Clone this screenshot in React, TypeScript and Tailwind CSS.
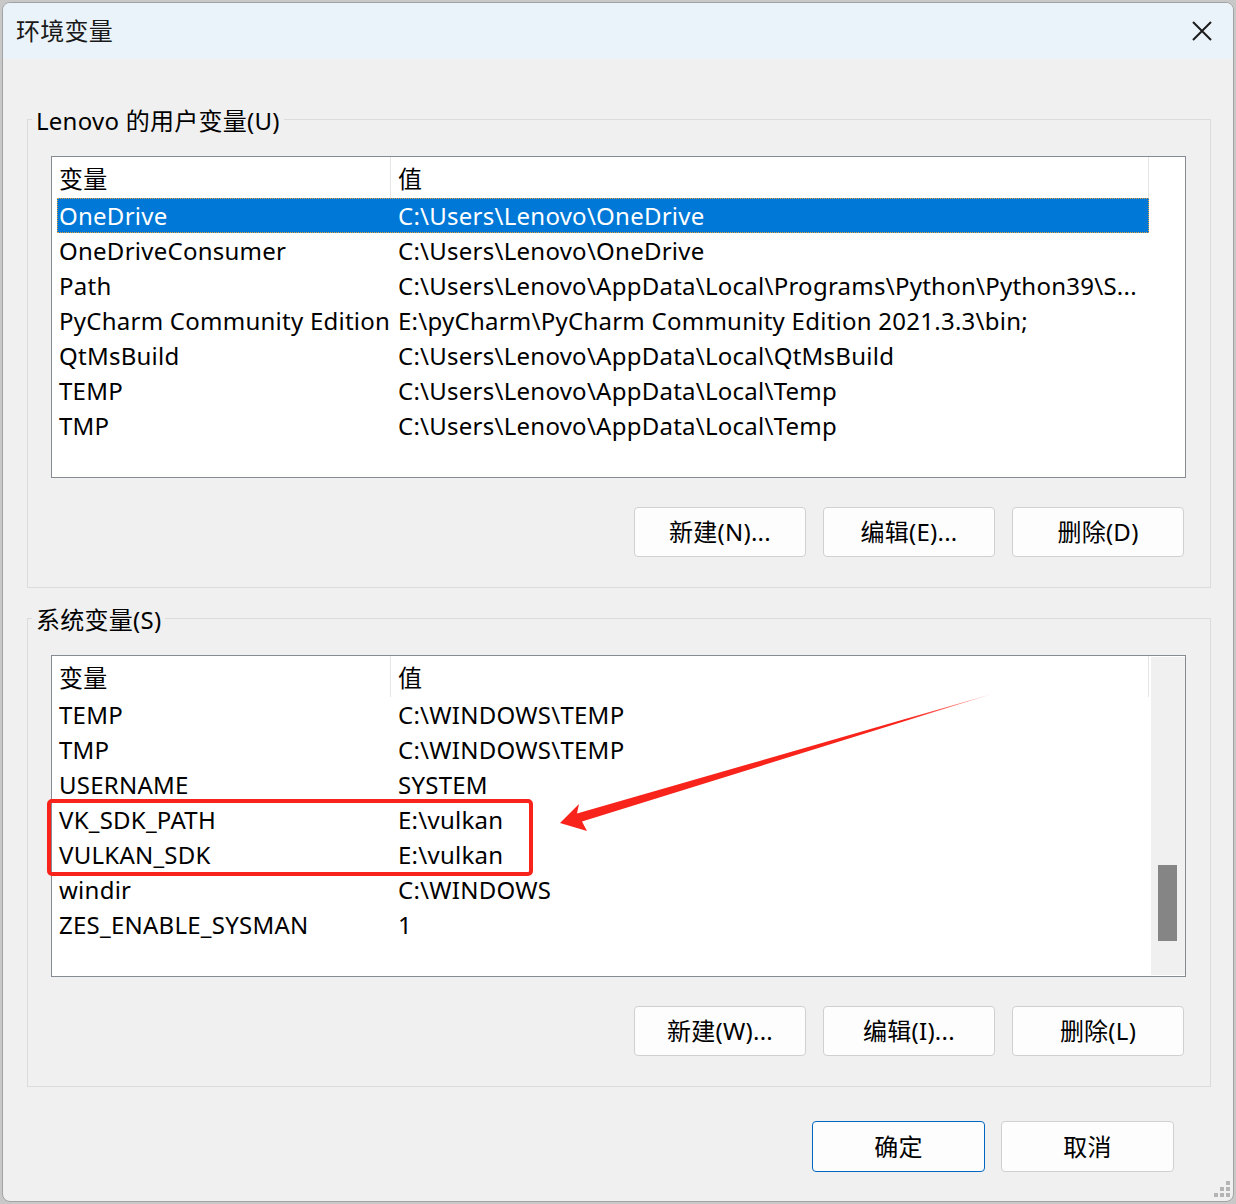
import React from 'react';

type Row = { name: string; value: string };

const userRows: Row[] = [
  { name: 'OneDrive', value: 'C:\\Users\\Lenovo\\OneDrive' },
  { name: 'OneDriveConsumer', value: 'C:\\Users\\Lenovo\\OneDrive' },
  { name: 'Path', value: 'C:\\Users\\Lenovo\\AppData\\Local\\Programs\\Python\\Python39\\S...' },
  { name: 'PyCharm Community Edition', value: 'E:\\pyCharm\\PyCharm Community Edition 2021.3.3\\bin;' },
  { name: 'QtMsBuild', value: 'C:\\Users\\Lenovo\\AppData\\Local\\QtMsBuild' },
  { name: 'TEMP', value: 'C:\\Users\\Lenovo\\AppData\\Local\\Temp' },
  { name: 'TMP', value: 'C:\\Users\\Lenovo\\AppData\\Local\\Temp' },
];

const systemRows: Row[] = [
  { name: 'TEMP', value: 'C:\\WINDOWS\\TEMP' },
  { name: 'TMP', value: 'C:\\WINDOWS\\TEMP' },
  { name: 'USERNAME', value: 'SYSTEM' },
  { name: 'VK_SDK_PATH', value: 'E:\\vulkan' },
  { name: 'VULKAN_SDK', value: 'E:\\vulkan' },
  { name: 'windir', value: 'C:\\WINDOWS' },
  { name: 'ZES_ENABLE_SYSMAN', value: '1' },
];

function ListView({ rows, selected, scrollbar }: { rows: Row[]; selected?: number; scrollbar?: boolean }) {
  return (
    <div className="flex h-[322px] border border-[#868a93] bg-white">
      <div className="flex-1 pl-[5px]">
        {/* header */}
        <div className="grid h-[41px] w-[1092px] grid-cols-[334px_758px] items-stretch">
          <div className="flex items-center border-r border-[#e5e5e5] pl-[2px] pt-[2px]">变量</div>
          <div className="flex items-center border-r border-[#e5e5e5] pl-[7px] pt-[2px]">值</div>
        </div>
        {rows.map((row, i) => {
          const isSel = i === selected;
          return (
            <div
              key={row.name}
              className={
                isSel
                  ? 'grid h-[35px] w-[1092px] grid-cols-[334px_758px] items-center bg-[#0078d7] text-white outline-1 -outline-offset-1 outline-dotted outline-[#e0a040]'
                  : 'grid h-[35px] w-[1092px] grid-cols-[334px_758px] items-center'
              }
            >
              <div className="overflow-hidden whitespace-nowrap pl-[2px]">{row.name}</div>
              <div className="overflow-hidden whitespace-nowrap pl-[7px]">{row.value}</div>
            </div>
          );
        })}
      </div>
      {scrollbar && (
        <div className="my-[1px] w-[34px] bg-[#f0f0f0] pt-[208px]">
          <div className="ml-[7px] h-[76px] w-[19px] bg-[#858585]" />
        </div>
      )}
    </div>
  );
}

function Button({ children, primary }: { children: React.ReactNode; primary?: boolean }) {
  return (
    <div
      className={
        primary
          ? 'flex h-[51px] w-[173px] items-center justify-center rounded-[4px] border border-[#0067c0] bg-[#fdfdfd]'
          : 'flex h-[51px] w-[173px] items-center justify-center rounded-[4px] border border-[#d0d0d0] bg-[#fdfdfd]'
      }
    >
      {children}
    </div>
  );
}

function GroupBox({ title, rows, selected, scrollbar, buttons }: {
  title: string;
  rows: Row[];
  selected?: number;
  scrollbar?: boolean;
  buttons: string[];
}) {
  return (
    <fieldset className="border border-[#dcdcdc] pb-[30px] pl-[23px] pr-[24px] pt-[19px]">
      <legend className="-ml-[19px] px-[4px] pt-[3px] leading-[32px]">{title}</legend>
      <ListView rows={rows} selected={selected} scrollbar={scrollbar} />
      <div className="mr-[2px] mt-[29px] flex justify-end gap-[17px]">
        {buttons.map((b) => (
          <div
            key={b}
            className="flex h-[50px] w-[172px] items-center justify-center rounded-[4px] border border-[#d0d0d0] bg-[#fdfdfd]"
          >
            {b}
          </div>
        ))}
      </div>
    </fieldset>
  );
}

export default function App() {
  return (
    <div className="relative h-[1204px] w-[1236px] bg-[#c8c8c8] p-[2px] font-['Noto_Sans','Noto_Sans_CJK_SC',sans-serif] text-[24px] leading-[32px] tracking-[0.25px] text-black">
      <div className="flex h-full flex-col overflow-hidden rounded-[8px] border border-[#a3a3a3] bg-[#f0f0f0]">
        {/* title bar */}
        <div className="flex h-[56px] shrink-0 items-center justify-between bg-[#ebf3fa] pl-[13px] pr-[21px]">
          <span className="text-[#1a1a1a]">环境变量</span>
          <svg width="20" height="20" viewBox="0 0 20 20" className="text-[#1a1a1a]">
            <path d="M1 1 L19 19 M19 1 L1 19" stroke="currentColor" strokeWidth="2" fill="none" />
          </svg>
        </div>

        {/* body */}
        <div className="flex flex-1 flex-col pl-[24px] pr-[22px] pt-[43px]">
          <GroupBox
            title="Lenovo 的用户变量(U)"
            rows={userRows}
            selected={0}
            buttons={['新建(N)...', '编辑(E)...', '删除(D)']}
          />
          <div className="mt-[13px]">
            <GroupBox
              title="系统变量(S)"
              rows={systemRows}
              scrollbar
              buttons={['新建(W)...', '编辑(I)...', '删除(L)']}
            />
          </div>
          <div className="mr-[37px] mt-[34px] flex justify-end gap-[16px]">
            <Button primary>确定</Button>
            <Button>取消</Button>
          </div>
        </div>
      </div>

      {/* resize grip */}
      <svg className="absolute left-[1212px] top-[1181px]" width="19" height="19" viewBox="0 0 19 19">
        <g fill="#b4b4b4">
          <rect x="14" y="0" width="4" height="4" />
          <rect x="8" y="6" width="4" height="4" />
          <rect x="14" y="6" width="4" height="4" />
          <rect x="2" y="12" width="4" height="4" />
          <rect x="8" y="12" width="4" height="4" />
          <rect x="14" y="12" width="4" height="4" />
        </g>
      </svg>

      {/* annotation: red box */}
      <div className="absolute left-[47px] top-[799px] h-[77px] w-[486px] rounded-[5px] border-4 border-[#f8231b]" />

      {/* annotation: arrow */}
      <svg className="pointer-events-none absolute left-0 top-0" width="1236" height="1204" viewBox="0 0 1236 1204">
        <defs>
          <linearGradient id="arrowFade" x1="560" y1="823" x2="992" y2="694" gradientUnits="userSpaceOnUse">
            <stop offset="0" stopColor="#f8231b" />
            <stop offset="0.8" stopColor="#f8231b" />
            <stop offset="1" stopColor="#ffb0a8" />
          </linearGradient>
        </defs>
        <polygon
          points="560,823 579,804 577,813.5 992,694 582,821.5 587,831"
          fill="url(#arrowFade)"
        />
      </svg>
    </div>
  );
}
